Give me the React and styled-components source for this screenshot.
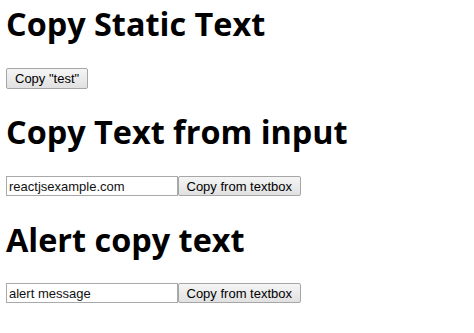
import React from "react";
import styled, { createGlobalStyle } from "styled-components";

const Global = createGlobalStyle`
  html, body { margin: 0; padding: 0; background: #fff; }
  body { font-family: "Liberation Sans", Arial, sans-serif; }
`;

const Page = styled.div`
  padding: 0 6px;
`;

const Section = styled.section`
  display: flex;
  flex-direction: column;
  height: 108px;
`;

const Title = styled.h1`
  margin: 0;
  padding-top: 1px;
  font-family: "Open Sans", "Noto Sans", sans-serif;
  font-weight: 700;
  font-size: 32.4px;
  line-height: 44px;
  color: #000;
`;

const Row = styled.div`
  display: flex;
  margin-top: ${(p) => p.$gap}px;
`;

const TextBox = styled.input`
  box-sizing: border-box;
  width: 172px;
  height: 20px;
  margin: 0;
  padding: 0 2px;
  border: 1px solid #a9a9a9;
  font-family: "Liberation Sans", Arial, sans-serif;
  font-size: 13px;
  color: #111;
  outline: none;
`;

const Button = styled.button`
  box-sizing: border-box;
  height: ${(p) => p.$h}px;
  margin: 0;
  padding: 0 ${(p) => p.$pad}px;
  border: 1px solid #a6a6a6;
  border-radius: 2px;
  background: linear-gradient(#f5f5f5, #e1e1e1);
  font-family: "Liberation Sans", Arial, sans-serif;
  font-size: 13px;
  color: #000;
`;

export default function App() {
  return (
    <Page>
      <Global />
      <Section>
        <Title>Copy Static Text</Title>
        <Row $gap={23}>
          <Button $h={21} $pad={8}>Copy "test"</Button>
        </Row>
      </Section>
      <Section>
        <Title>Copy Text from input</Title>
        <Row $gap={23}>
          <TextBox defaultValue="reactjsexample.com" />
          <Button $h={20} $pad={7.5}>Copy from textbox</Button>
        </Row>
      </Section>
      <Section>
        <Title>Alert copy text</Title>
        <Row $gap={22}>
          <TextBox defaultValue="alert message" />
          <Button $h={20} $pad={7.5}>Copy from textbox</Button>
        </Row>
      </Section>
    </Page>
  );
}
